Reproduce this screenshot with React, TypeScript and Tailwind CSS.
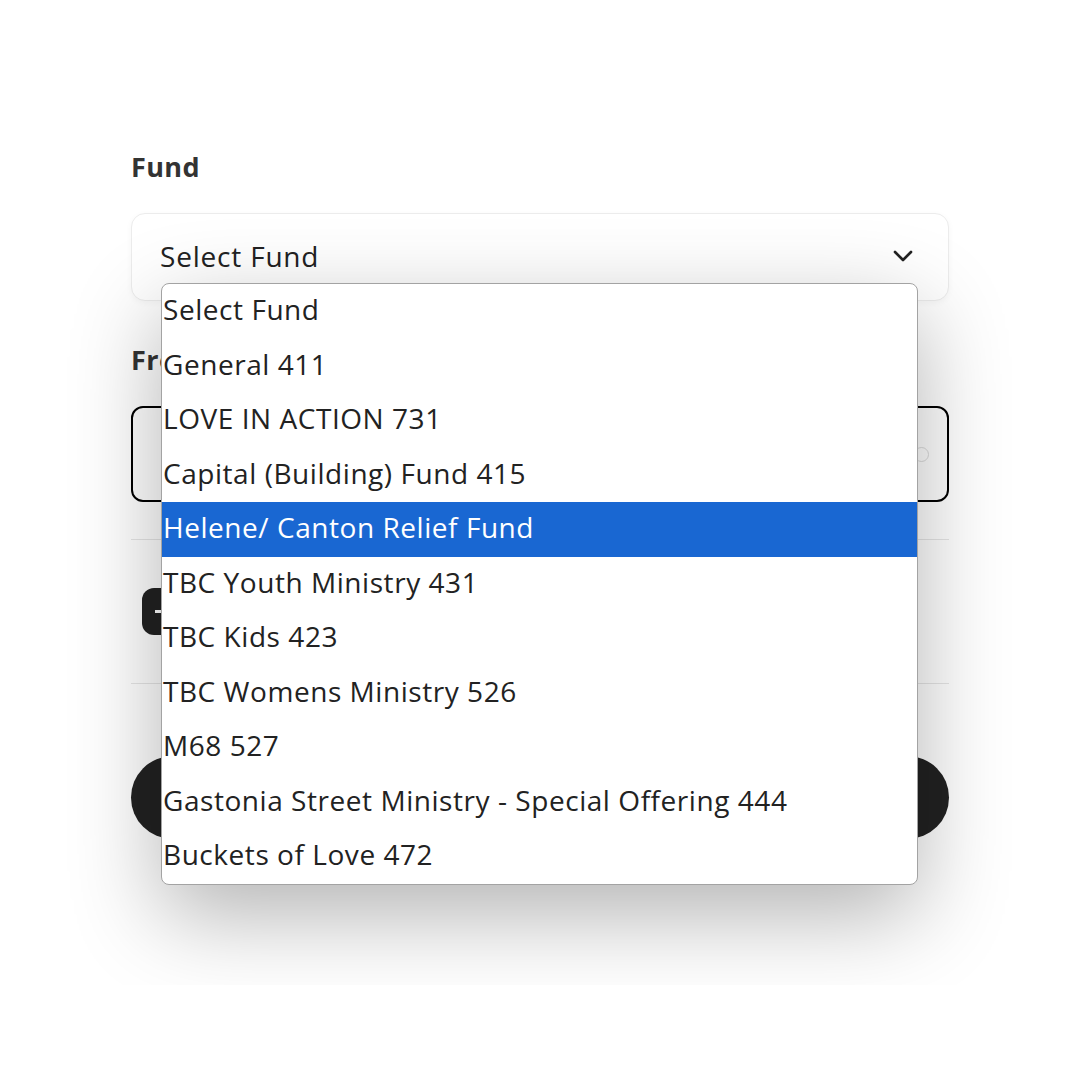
import { ChevronDown } from "lucide-react";

const funds = [
  "Select Fund",
  "General 411",
  "LOVE IN ACTION 731",
  "Capital (Building) Fund 415",
  "Helene/ Canton Relief Fund",
  "TBC Youth Ministry 431",
  "TBC Kids 423",
  "TBC Womens Ministry 526",
  "M68 527",
  "Gastonia Street Ministry - Special Offering 444",
  "Buckets of Love 472",
];

export default function App() {
  const selected = 4;

  return (
    <div className="h-[1080px] w-full bg-white font-['Open_Sans',sans-serif] text-[#222]">
      <div className="relative h-[985px] overflow-hidden">
        <div className="ml-[131px] w-[818px] pt-[151px]">
          <div className="text-[27px] font-bold leading-[32px] tracking-[0.4px] text-[#333]">Fund</div>

          {/* select */}
          <div className="relative mt-[30px]">
            <div className="flex h-[88px] items-center justify-between rounded-[14px] border border-[#ececec] bg-white pb-[3px] pl-[28px] pr-[29px] shadow-[0_2px_6px_rgba(0,0,0,0.04)]">
              <span className="text-[28px] tracking-[0.8px]">Select Fund</span>
              <ChevronDown className="h-[32px] w-[32px] text-[#222]" strokeWidth={2} />
            </div>

            {/* native option list */}
            <div className="absolute left-[30px] top-[70px] z-20 w-[757px] overflow-hidden rounded-lg border border-[#a3a3a3] bg-white shadow-[0_30px_90px_rgba(0,0,0,0.3)]">
              {funds.map((f, i) => (
                <div
                  key={f}
                  className={`flex h-[54.5px] items-center px-[1px] pb-[4px] text-[28px] tracking-[0.55px] ${
                    i === selected ? "bg-[#1967d2] text-white" : "text-[#222]"
                  }`}
                >
                  {f}
                </div>
              ))}
            </div>
          </div>

          <div className="mt-[43px] text-[27px] font-bold leading-[32px] tracking-[0.4px] text-[#333]">Frequency</div>

          {/* frequency options */}
          <div className="mt-[30px]">
            <div className="flex h-[96px] items-center justify-end rounded-[12px] border-2 border-black px-6">
              <span className="mr-[-6px] h-[15px] w-[15px] rounded-full border border-[#dcdcdc]" />
            </div>
            <div className="mt-[37px] border-t border-[#e6e6e6]" />
            <div className="flex h-[143px] items-center pl-[11px]">
              <div className="relative h-[47px] w-[60px] rounded-[12px] bg-[#222]">
                <span className="absolute left-[13px] top-[22px] h-[3px] w-[14px] bg-white" />
              </div>
            </div>
            <div className="border-t border-[#e6e6e6]" />
          </div>

          <div className="mt-[72px] h-[83px] w-full rounded-full bg-[#222]" />
        </div>
      </div>
    </div>
  );
}
